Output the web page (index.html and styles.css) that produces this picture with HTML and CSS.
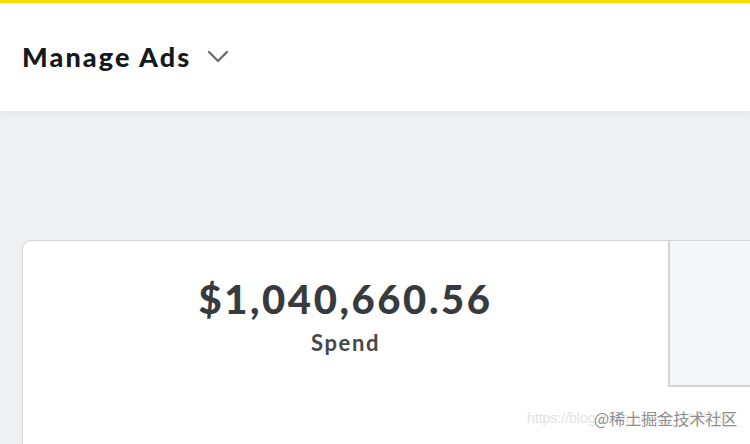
FILE: index.html
```html
<!DOCTYPE html>
<html lang="en">
<head>
    <meta charset="UTF-8">
    <meta name="viewport" content="width=device-width, initial-scale=1.0">
    <title>Manage Ads</title>
    <link rel="stylesheet" href="styles.css">
</head>
<body>
    <header class="topbar">
        <h1 class="title">Manage Ads</h1>
        <svg class="chevron" width="22" height="14" viewBox="0 0 22 14">
            <path d="M2 2 L11 11 L20 2" fill="none" stroke="#6e6e6e" stroke-width="2.4" stroke-linecap="round" stroke-linejoin="round"/>
        </svg>
    </header>

    <main class="content">
        <div class="stats-card">
            <div class="stat">
                <div class="stat-value">$1,040,660.56</div>
                <div class="stat-label">Spend</div>
            </div>
            <div class="stat-side"></div>
        </div>
    </main>

    <div class="watermark">
        <span class="wm-url">https://blog.csdn.net/qq_3665398</span>
        <span class="wm-name">@稀土掘金技术社区</span>
    </div>
</body>
</html>
```

FILE: styles.css
```css
* {
    box-sizing: border-box;
    margin: 0;
    padding: 0;
}

body {
    font-family: 'Lato', 'Noto Sans', sans-serif;
    background-color: #eff0f2;
    height: 100vh;
    overflow: hidden;
}

.topbar {
    display: flex;
    align-items: center;
    height: 111px;
    padding: 0 22px 2px;
    background-color: white;
    border-top: 3px solid #ffdb00;
    box-shadow: 0 2px 10px rgba(0, 0, 0, 0.06);
    position: relative;
}

.title {
    font-size: 27px;
    font-weight: 900;
    color: #16191c;
    letter-spacing: 2.1px;
}

.chevron {
    margin-left: 16px;
    margin-top: 2px;
}

.content {
    padding: 129px 0 0 22px;
}

.stats-card {
    display: flex;
    height: 260px;
    background-color: white;
    border: 1.5px solid #d3d4d6;
    border-right: none;
    border-radius: 9px 0 0 0;
}

.stat {
    width: 645px;
    padding-top: 34px;
    text-align: center;
}

.stat-value {
    font-size: 40px;
    font-weight: 900;
    color: #383b3e;
    letter-spacing: 2.6px;
    line-height: 48px;
}

.stat-label {
    margin-top: 6px;
    font-size: 22px;
    font-weight: 700;
    color: #45484b;
    letter-spacing: 1.6px;
}

.stat-side {
    flex: 1;
    height: 146px;
    background-color: #f6f7f9;
    border-left: 2px solid #d3d4d6;
    border-bottom: 2px solid #d3d4d6;
}

.watermark {
    position: absolute;
    left: 527px;
    top: 407px;
    width: 220px;
    height: 24px;
}

.wm-url {
    position: absolute;
    left: 0;
    top: 3px;
    font-family: 'Liberation Sans', sans-serif;
    font-size: 14px;
    color: #e3e3e3;
    white-space: nowrap;
}

.wm-name {
    position: absolute;
    left: 67px;
    top: 0;
    font-family: 'Noto Sans CJK SC', sans-serif;
    font-size: 16px;
    line-height: 22px;
    color: #8f8f8f;
    text-shadow: 0 0 2px white;
    white-space: nowrap;
}
```
